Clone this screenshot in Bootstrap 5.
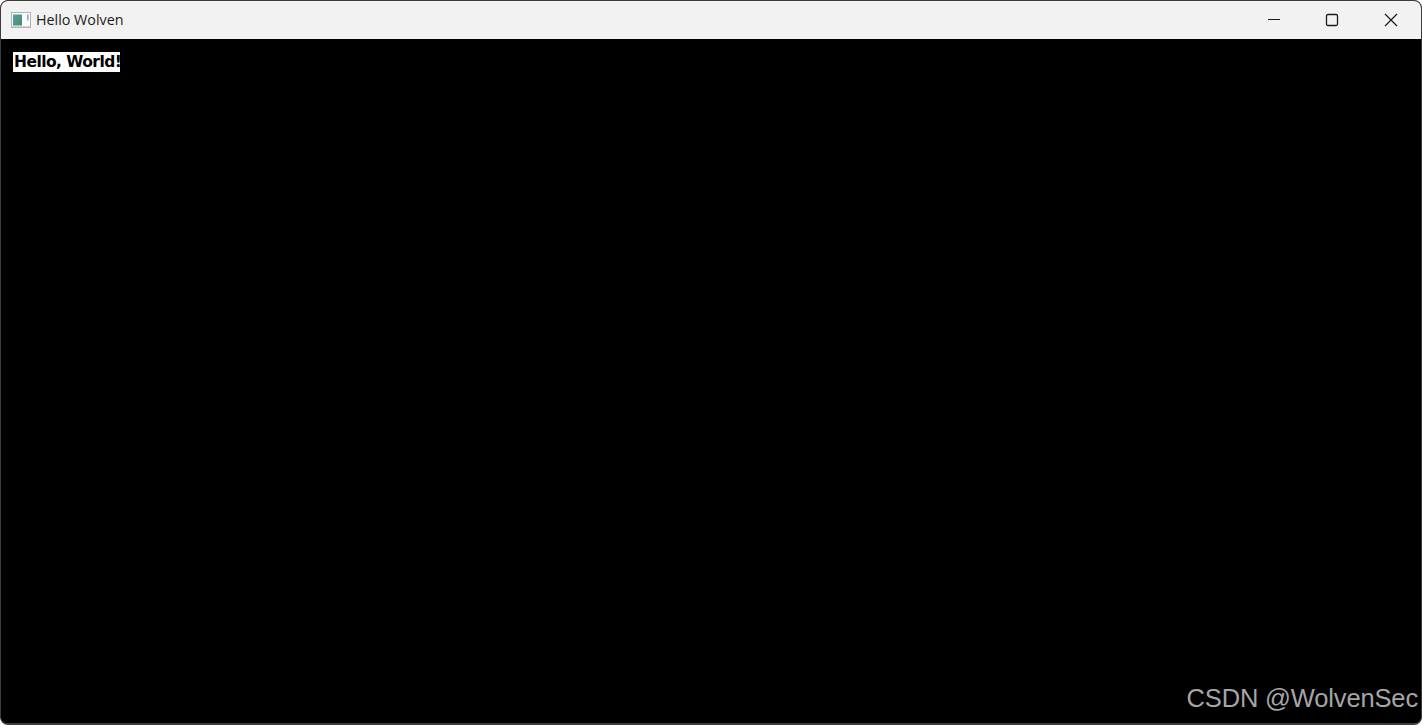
<!DOCTYPE html>
<html lang="en">
<head>
<meta charset="utf-8">
<title>Hello Wolven</title>
<link rel="stylesheet" href="https://cdn.jsdelivr.net/npm/bootstrap@5.3.0/dist/css/bootstrap.min.css">
<style>
html,body{height:100%;margin:0;background:#fff;overflow:hidden}
.app-window{height:725px;border:1px solid #3c3c3c;border-bottom-width:2px;border-radius:8px;overflow:hidden;background:#000}
.app-titlebar{height:38px;background:#f3f2f2;color:#1c1c1c;padding-left:10px;padding-right:1px}
.app-title{margin-left:5px;font-family:"Open Sans","Liberation Sans",sans-serif;font-size:14.3px}
.app-ctl{width:58.5px;height:38px}
.app-body{background:#000;padding:13px 12px}
.hello-text{background:#fff;color:#000;font:bold 15.5px/20px "DejaVu Sans",sans-serif;padding:0 1px;width:107px;white-space:nowrap;letter-spacing:-.55px}
.wm-text{position:absolute;right:3px;bottom:9px;color:#a6a6a6;font:25.5px/32px "Liberation Sans",sans-serif;letter-spacing:-.15px}
</style>
</head>
<body>
<div class="app-window d-flex flex-column position-relative">
  <div class="app-titlebar d-flex align-items-center flex-shrink-0">
    <svg width="20" height="16" viewBox="0 0 20 16" aria-hidden="true">
      <defs><linearGradient id="g1" x1="0" y1="0" x2="1" y2="1"><stop offset="0" stop-color="#5f9bb0"/><stop offset="1" stop-color="#3f8f66"/></linearGradient></defs>
      <rect x=".5" y=".5" width="19" height="15" fill="#fbfbfb" stroke="#b4b4b4"/>
      <rect x="2" y="2.5" width="9" height="11" fill="url(#g1)"/>
      <rect x="16" y="2.5" width="1.6" height="6" fill="#7fb3c4"/>
      <rect x="1" y="14" width="18" height="1" fill="#d4d4d4"/>
    </svg>
    <span class="app-title flex-grow-1">Hello Wolven</span>
    <div class="app-ctl d-flex align-items-center justify-content-center">
      <svg width="14" height="14" viewBox="0 0 14 14"><path d="M1 6.5H13" stroke="#1a1a1a" stroke-width="1.2" fill="none"/></svg>
    </div>
    <div class="app-ctl d-flex align-items-center justify-content-center">
      <svg width="14" height="14" viewBox="0 0 14 14"><rect x="1.5" y="1.5" width="11" height="11" rx="1.5" stroke="#1a1a1a" stroke-width="1.3" fill="none"/></svg>
    </div>
    <div class="app-ctl d-flex align-items-center justify-content-center">
      <svg width="14" height="14" viewBox="0 0 14 14"><path d="M1 1L13 13M13 1L1 13" stroke="#1a1a1a" stroke-width="1.2" fill="none"/></svg>
    </div>
  </div>
  <div class="app-body flex-grow-1"><span class="hello-text d-block">Hello, World!</span></div>
  <div class="wm-text">CSDN @WolvenSec</div>
</div>
<script src="https://cdn.jsdelivr.net/npm/bootstrap@5.3.0/dist/js/bootstrap.bundle.min.js"></script>
</body>
</html>
